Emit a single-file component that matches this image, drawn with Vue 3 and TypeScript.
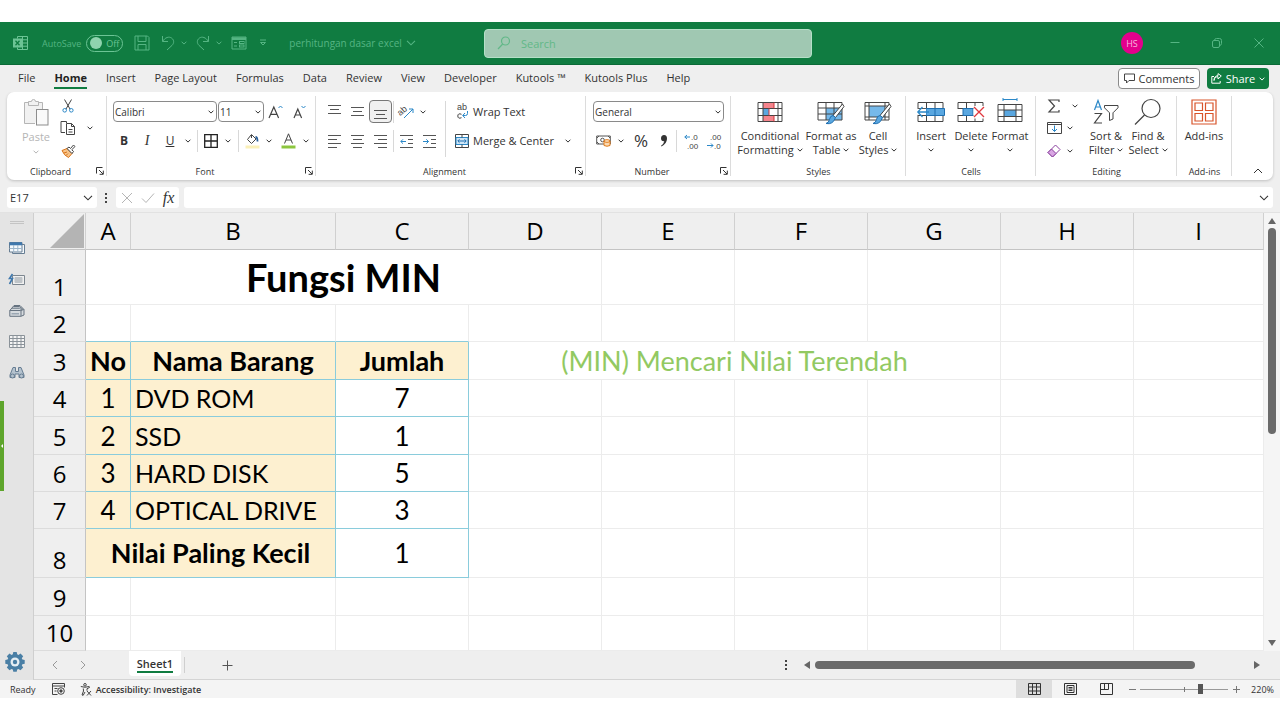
<script setup lang="ts">
import { h, ref } from 'vue'

interface Cell {
  text?: string
  span?: number
  kind?: string
}
interface Row {
  height: number
  cells: Cell[]
}

const Chev = () =>
  h('svg', { class: 'chev', width: 6, height: 4, viewBox: '0 0 6 4', 'aria-hidden': 'true' }, [
    h('path', { d: 'M.6.7 3 3.1 5.4.7', fill: 'none', stroke: 'currentColor', 'stroke-width': 1 }),
  ])

const BigChev = () =>
  h('svg', { class: 'chev', width: 10, height: 6, viewBox: '0 0 10 6', 'aria-hidden': 'true' }, [
    h('path', { d: 'M1 .8 5 4.8 9 .8', fill: 'none', stroke: 'currentColor', 'stroke-width': 1.1 }),
  ])

const Launcher = () =>
  h('button', { class: 'launcher', type: 'button', 'aria-label': 'More options' }, [
    h('svg', { width: 8, height: 8, viewBox: '0 0 8 8' }, [
      h('path', { d: 'M.5 6.5V.5h6M3 3l4 4M7.3 3.6v3.7H3.6', fill: 'none', stroke: '#333', 'stroke-width': 1 }),
    ]),
  ])

const tabs = [
  'File', 'Home', 'Insert', 'Page Layout', 'Formulas', 'Data', 'Review', 'View',
  'Developer', 'Kutools ™', 'Kutools Plus', 'Help',
]
const activeTab = ref('Home')

const columns = ['A', 'B', 'C', 'D', 'E', 'F', 'G', 'H', 'I']
const blank = (n: number): Cell[] => Array.from({ length: n }, () => ({}))

const item = (no: string, name: string, qty: string): Cell[] => [
  { text: no, kind: 'box tint' },
  { text: name, kind: 'box tint left' },
  { text: qty, kind: 'box' },
  ...blank(6),
]

const rows: Row[] = [
  { height: 55, cells: [{ text: 'Fungsi MIN', span: 4, kind: 'title' }, ...blank(5)] },
  { height: 37, cells: [{ kind: 'above' }, { kind: 'above' }, { kind: 'above' }, ...blank(6)] },
  {
    height: 38,
    cells: [
      { text: 'No', kind: 'box tint bold' },
      { text: 'Nama Barang', kind: 'box tint bold' },
      { text: 'Jumlah', kind: 'box tint bold' },
      { text: '(MIN) Mencari Nilai Terendah', span: 4, kind: 'note' },
      ...blank(2),
    ],
  },
  { height: 37, cells: item('1', 'DVD ROM', '7') },
  { height: 38, cells: item('2', 'SSD', '1') },
  { height: 37, cells: item('3', 'HARD DISK', '5') },
  { height: 37, cells: item('4', 'OPTICAL DRIVE', '3') },
  {
    height: 49,
    cells: [
      { text: 'Nilai Paling Kecil', span: 2, kind: 'box tint bold' },
      { text: '1', kind: 'box' },
      ...blank(6),
    ],
  },
  { height: 38, cells: blank(9) },
  { height: 35, cells: blank(9) },
]

const zoom = ref(70)
const search = ref('')
const autoSave = ref(false)
const nameBox = ref('E17')
const formula = ref('')
</script>

<template>
  <div class="app">
    <header class="titlebar">
      <div class="tb-left">
        <svg class="logo" width="16" height="16" viewBox="0 0 16 16" fill="none" stroke="#6cc495">
          <path d="M4.5 3.5v-2h10v13h-10v-2M9.500 1.500v13M9.500 4.800h5M9.500 8h5M9.500 11.200h5" />
          <rect x=".5" y="4" width="8" height="8" fill="#6cc495" />
          <path d="M2.500 5.800l4 4.500M6.500 5.800l-4 4.500" stroke="#107c41" stroke-width="1.300" />
        </svg>
        <label class="autosave">
          <span>AutoSave</span>
          <input v-model="autoSave" type="checkbox" />
          <span class="switch"><i></i>Off</span>
        </label>
        <button class="tb save" type="button" aria-label="Save">
          <svg width="16" height="16" viewBox="0 0 16 16" fill="none" stroke="currentColor">
            <path d="M1 1h12.500l1.500 1.500V15H1zM4 1v5.500h8V1M4 15V9.500h8V15" />
          </svg>
        </button>
        <button class="tb undo" type="button" aria-label="Undo">
          <svg width="14" height="16" viewBox="0 0 14 16" fill="none" stroke="currentColor">
            <path d="M1.500 1v5.500H7M1.700 6.300C4 2.500 8 1 10.800 3.200c2.500 2 2.400 5 .2 7.200L6 15" />
          </svg>
        </button>
        <button class="tb more" type="button" aria-label="Undo list"><Chev /></button>
        <button class="tb redo" type="button" aria-label="Redo">
          <svg width="14" height="16" viewBox="0 0 14 16" fill="none" stroke="currentColor">
            <path d="M12.500 1v5.500H7M12.300 6.300C10 2.500 6 1 3.200 3.200c-2.500 2-2.400 5-.2 7.200L8 15" />
          </svg>
        </button>
        <button class="tb more" type="button" aria-label="Redo list"><Chev /></button>
        <button class="tb form" type="button" aria-label="Form">
          <svg width="16" height="14" viewBox="0 0 16 14" fill="none" stroke="currentColor">
            <path d="M1 1h14v12H1zM1 3.500h14M3 6.500h3M3 10h3" />
            <path d="M1 2.300h14" stroke-width="2" />
            <rect x="8.500" y="5.500" width="4.500" height="2" /><rect x="8.500" y="9" width="4.500" height="2" />
          </svg>
        </button>
        <button class="tb custom" type="button" aria-label="Customize toolbar">
          <svg width="8" height="8" viewBox="0 0 8 8" fill="none" stroke="currentColor"><path d="M1 1h6M1.500 3.500h5L4 6z" /></svg>
        </button>
        <button class="tb doc" type="button">perhitungan dasar excel <BigChev /></button>
      </div>
      <label class="search">
        <svg width="14" height="14" viewBox="0 0 14 14" fill="none" stroke="#62b888" stroke-width="1.200">
          <circle cx="8.500" cy="5" r="4" /><path d="M5.700 8 1 13" />
        </svg>
        <input v-model="search" type="text" placeholder="Search" aria-label="Search" />
      </label>
      <div class="tb-right">
        <button class="avatar" type="button">HS</button>
        <button class="win" type="button" aria-label="Minimize">
          <svg width="12" height="12" viewBox="0 0 12 12" fill="none" stroke="currentColor"><path d="M1.500 5.500h9" /></svg>
        </button>
        <button class="win" type="button" aria-label="Restore">
          <svg width="12" height="12" viewBox="0 0 12 12" fill="none" stroke="currentColor">
            <rect x="1.500" y="3.500" width="7" height="7" rx="1.500" /><path d="M3.500 3.200q.2-1.700 2-1.700h3q2 0 2 2v3q0 1.600-1.700 2" />
          </svg>
        </button>
        <button class="win" type="button" aria-label="Close">
          <svg width="12" height="12" viewBox="0 0 12 12" fill="none" stroke="currentColor"><path d="M1.500 1.500l9 9M10.500 1.500l-9 9" /></svg>
        </button>
      </div>
    </header>

    <nav class="tabs">
      <button
        v-for="t in tabs" :key="t" type="button" class="tab" :class="{ active: t === activeTab }"
        @click="activeTab = t"
      >{{ t }}</button>
      <button class="comments" type="button">
        <svg width="11" height="11" viewBox="0 0 11 11" fill="none" stroke="#444"><path d="M.5 1h10v6.500H5L2.500 10V7.500h-2z" /></svg>
        Comments
      </button>
      <button class="share" type="button">
        <svg width="11" height="11" viewBox="0 0 11 11" fill="none" stroke="#fff">
          <path d="M3 3.500H.8v6.700h8.400V8M3 7.500c.3-2.600 1.700-3.700 4-3.800V6l3.300-3L7 .6v2C4.500 2.800 3 4.500 3 7.500z" />
        </svg>
        Share <Chev />
      </button>
    </nav>

    <section class="ribbon">
      <div class="group g-clip">
        <div class="body">
          <button class="paste" type="button">
            <svg width="26" height="28" viewBox="0 0 26 28" fill="#f1f1f1" stroke="#b5b5b5">
              <path d="M12 24.500H1.500V3.500h18V10" /><path d="M5.500 6.500v-4h3q0-2 2-2t2 2h3v4z" />
              <rect x="13.500" y="10.500" width="11.500" height="15.500" fill="#fafafa" stroke="#8d8d8d" />
            </svg>
            <span>Paste</span><Chev />
          </button>
          <div class="stack">
            <div class="line">
              <button class="b20" type="button" aria-label="Cut">
                <svg width="12" height="14" viewBox="0 0 12 14" fill="none" stroke="#444">
                  <path d="M2.500.5 8 10M9.500.5 4 10" /><circle cx="2.700" cy="11.300" r="1.800" stroke="#2b88c8" /><circle cx="9.300" cy="11.300" r="1.800" stroke="#2b88c8" />
                </svg>
              </button>
            </div>
            <div class="line">
              <button class="b20" type="button" aria-label="Copy">
                <svg width="16" height="16" viewBox="0 0 16 16" fill="none" stroke="#444">
                  <path d="M5 12.500H1v-11h5.500V3M6.500 3.500h5l3 3v8h-8zM11.500 3.500v3h3M8.500 9.500h4M8.500 12h4" />
                </svg>
              </button>
              <button class="b14 gap" type="button" aria-label="Copy options"><Chev /></button>
            </div>
            <div class="line">
              <button class="b20" type="button" aria-label="Format painter">
                <svg width="15" height="14" viewBox="0 0 15 14" fill="none">
                  <path d="M1 6.500 6 4.500l5 5-3.500 4Q3 11.500 1 6.500z" fill="#f7c48a" stroke="#d9741a" /><path d="M3 9l3-1M5 11.500l2-2" stroke="#d9741a" />
                  <path d="M6 4.500 8 3l1.500 1.500L12.500 1l1.500 1.500-3.200 3.200L12.500 7.500 11 9.500z" fill="#fff" stroke="#444" />
                </svg>
              </button>
            </div>
          </div>
        </div>
        <div class="cap"><span>Clipboard</span><Launcher /></div>
      </div>

      <div class="group g-font">
        <div class="body rows">
          <div class="line">
            <label class="combo c-font"><select aria-label="Font"><option>Calibri</option></select><Chev /></label>
            <label class="combo c-size"><select aria-label="Font size"><option>11</option></select><Chev /></label>
            <button class="b24" type="button" aria-label="Increase font size">
              <svg width="16" height="16" viewBox="0 0 16 16"><path d="M1 14 5.800 3 10.600 14M2.700 10.300h6.200" fill="none" stroke="#444" stroke-width="1.200" /><path d="M10.500 4l2-2 2 2" fill="none" stroke="#2b88c8" /></svg>
            </button>
            <button class="b24" type="button" aria-label="Decrease font size">
              <svg width="16" height="16" viewBox="0 0 16 16"><path d="M2 14 5.800 5 9.600 14M3.400 11h4.800" fill="none" stroke="#444" stroke-width="1.200" /><path d="M9.500 2l2 2 2-2" fill="none" stroke="#2b88c8" /></svg>
            </button>
          </div>
          <div class="line">
            <button class="b24 glyph" type="button"><b>B</b></button>
            <button class="b22 glyph serif" type="button"><i>I</i></button>
            <button class="b24 glyph" type="button"><u>U</u></button>
            <button class="b12" type="button" aria-label="Underline options"><Chev /></button>
            <span class="sep"></span>
            <button class="b20" type="button" aria-label="Borders">
              <svg width="14" height="14" viewBox="0 0 14 14" fill="none" stroke="#222" stroke-width="1.300"><path d="M.7.7h12.600v12.600H.7zM7 .7v12.600M.7 7h12.600" /></svg>
            </button>
            <button class="b14" type="button" aria-label="Border options"><Chev /></button>
            <span class="sep"></span>
            <button class="b20" type="button" aria-label="Fill colour">
              <svg width="15" height="16" viewBox="0 0 15 16" fill="none">
                <path d="M6 2 2.500 6.500l4 4L11 6 6.500 1.500V5" stroke="#444" /><path d="M10.500 4q2 0 2 4.500" stroke="#2b5f9a" stroke-width="1.800" />
                <path d="M.5 12.500h14v3H.5z" fill="#fbf0b8" />
              </svg>
            </button>
            <button class="b14" type="button" aria-label="Fill options"><Chev /></button>
            <button class="b24" type="button" aria-label="Font colour">
              <svg width="15" height="16" viewBox="0 0 15 16"><path d="M3.500 10.500 7.500.8 11.500 10.500M5 7h5" fill="none" stroke="#444" /><path d="M.5 12.500h14v3H.5z" fill="#8cc63f" /></svg>
            </button>
            <button class="b12" type="button" aria-label="Font colour options"><Chev /></button>
          </div>
        </div>
        <div class="cap"><span>Font</span><Launcher /></div>
      </div>

      <div class="group g-align">
        <div class="body">
          <div class="rows acol">
            <div class="line">
              <button class="b23" type="button" aria-label="Top align">
                <svg width="13" height="14" viewBox="0 0 13 14" stroke="#555"><path d="M0 .5h13M2 4.500h9M0 8.500h13" /></svg>
              </button>
              <button class="b23" type="button" aria-label="Middle align">
                <svg width="13" height="14" viewBox="0 0 13 14" stroke="#555"><path d="M0 2.500h13M2 6.500h9M0 10.500h13" /></svg>
              </button>
              <button class="b23 on" type="button" aria-label="Bottom align">
                <svg width="13" height="14" viewBox="0 0 13 14" stroke="#555"><path d="M0 5.500h13M2 9.500h9M0 13.500h13" /></svg>
              </button>
              <span class="sep thin"></span>
              <button class="b22" type="button" aria-label="Orientation">
                <svg width="15" height="14" viewBox="0 0 15 14" fill="none"><text x="0" y="8" transform="rotate(-42 5 8)" font-size="9" fill="#444">ab</text><path d="M5 13 14 4M10 4h4v4" stroke="#2b88c8" /></svg>
              </button>
              <button class="b12" type="button" aria-label="Orientation options"><Chev /></button>
            </div>
            <div class="line">
              <button class="b23" type="button" aria-label="Align left">
                <svg width="13" height="14" viewBox="0 0 13 14" stroke="#555"><path d="M0 1.500h13M0 5.500h9M0 9.500h13M0 13.500h9" /></svg>
              </button>
              <button class="b23" type="button" aria-label="Center">
                <svg width="13" height="14" viewBox="0 0 13 14" stroke="#555"><path d="M0 1.500h13M2 5.500h9M0 9.500h13M2 13.500h9" /></svg>
              </button>
              <button class="b23" type="button" aria-label="Align right">
                <svg width="13" height="14" viewBox="0 0 13 14" stroke="#555"><path d="M0 1.500h13M4 5.500h9M0 9.500h13M4 13.500h9" /></svg>
              </button>
              <span class="sep thin"></span>
              <button class="b22" type="button" aria-label="Decrease indent">
                <svg width="13" height="14" viewBox="0 0 13 14" fill="none" stroke="#555"><path d="M0 1.500h13M8 5.500h5M8 9.500h5M0 13.500h13" /><path d="M6 7.500H.8M3 5.300.8 7.500 3 9.700" stroke="#2b88c8" /></svg>
              </button>
              <button class="b24" type="button" aria-label="Increase indent">
                <svg width="13" height="14" viewBox="0 0 13 14" fill="none" stroke="#555"><path d="M0 1.500h13M8 5.500h5M8 9.500h5M0 13.500h13" /><path d="M0 7.500h5.500M3.300 5.300l2.200 2.200-2.200 2.200" stroke="#2b88c8" /></svg>
              </button>
            </div>
          </div>
          <span class="tall"></span>
          <div class="rows wcol">
            <div class="line">
              <button class="wide" type="button">
                <svg width="14" height="16" viewBox="0 0 14 16" fill="none"><text x="2" y="6" font-size="9" fill="#444">ab</text><path d="M6.500 10.300q-3.500-1.500-3.700 1.700.2 3.200 3.700 1.700" stroke="#444" /><path d="M12.500 7v2.500q0 2-2 2H8M10 9l-2.300 2.500L10 14" stroke="#2b88c8" /></svg>
                Wrap Text
              </button>
            </div>
            <div class="line">
              <button class="wide" type="button">
                <svg width="14" height="14" viewBox="0 0 14 14" fill="none"><path d="M.5.5h13v13H.5z" stroke="#444" /><path d="M1 3.500h12v7H1z" fill="#cfe6f7" stroke="#2b88c8" /><path d="M7 .5v3M7 10.500v3" stroke="#444" /><path d="M3 7h8M4.500 5.300 2.800 7l1.700 1.700M9.500 5.300 11.200 7 9.500 8.700" stroke="#1f6fb0" /></svg>
                Merge &amp; Center
              </button>
              <button class="b14 mergemore" type="button" aria-label="Merge options"><Chev /></button>
            </div>
          </div>
        </div>
        <div class="cap"><span>Alignment</span><Launcher /></div>
      </div>

      <div class="group g-num">
        <div class="body rows">
          <div class="line">
            <label class="combo c-num"><select aria-label="Number format"><option>General</option></select><Chev /></label>
          </div>
          <div class="line">
            <button class="b22" type="button" aria-label="Accounting format">
              <svg width="16" height="14" viewBox="0 0 16 14" fill="none"><path d="M.7 2h13.600v8H.7z" stroke="#555" /><path d="M3 2 1 4M12 2l2 2M1 8l2 2" stroke="#555" /><circle cx="6.500" cy="6" r="1.800" stroke="#555" /><path d="M8 7v4.500q3 1.500 6 0V7q-3 1.400-6 0z" fill="#fbd9b0" stroke="#e07b1a" /><ellipse cx="11" cy="7" rx="3" ry="1.300" fill="#fbe6cc" stroke="#e07b1a" /></svg>
            </button>
            <button class="b12" type="button" aria-label="Accounting options"><Chev /></button>
            <button class="b28 pct" type="button">%</button>
            <button class="b18" type="button" aria-label="Comma style">
              <svg width="8" height="12" viewBox="0 0 8 12"><path d="M4 0q3.200.2 3 4Q6.600 9 1.500 11.500L1 10.700Q4 8.500 4.300 6.200 1 6.500 1 3.200 1.200.2 4 0z" fill="#333" /></svg>
            </button>
            <span class="sep"></span>
            <button class="b22" type="button" aria-label="Increase decimal">
              <svg class="dec" width="14" height="18" viewBox="0 0 14 18"><path d="M6 5H.8M3 3 .8 5 3 7" fill="none" stroke="#2b88c8" /><text x="7" y="8">.0</text><text x="3" y="17">.00</text></svg>
            </button>
            <button class="b24" type="button" aria-label="Decrease decimal">
              <svg class="dec" width="14" height="18" viewBox="0 0 14 18"><path d="M0 13.500h6M4 11.500l2 2-2 2" fill="none" stroke="#2b88c8" /><text x="3" y="8">.00</text><text x="7" y="17">.0</text></svg>
            </button>
          </div>
        </div>
        <div class="cap"><span>Number</span><Launcher /></div>
      </div>

      <div class="group g-styles">
        <div class="body bigs">
          <button class="big w72" type="button">
            <svg width="26" height="24" viewBox="0 0 26 24" fill="none">
              <path d="M1 2.500h24v19H1z" fill="#fff" /><path d="M6 2.500h11v6H6zM6 15.500h11v6H6zM6 8.500h8v7H6z" fill="#f5848c" /><path d="M6 8.500h6v7H6z" fill="#5aa7e0" /><path d="M12 8.500h7v7h-7z" fill="#fff" />
              <path d="M1 2.500h24v19H1zM1 8.500h24M1 15.500h24M6 2.500v19M21 2.500v19" stroke="#444" /><path d="M17 2.500v6M12 8.500v7M17 15.500v6" stroke="#d13438" />
            </svg>
            <span>Conditional</span><span>Formatting <Chev /></span>
          </button>
          <button class="big w50" type="button">
            <svg width="28" height="26" viewBox="0 0 28 26" fill="none">
              <path d="M9 9h16v12H9z" fill="#76b9ea" /><path d="M1 3.500h24v17.500H1zM1 9h24M1 15h24M9 3.500V21M17 3.500V21" stroke="#444" />
              <path d="M25.500 5 16 16.500l2.500 2L27 7.500z" fill="#fff" stroke="#444" /><path d="M16 16.500q-3 .3-3.500 4-.5 3-3.500 4 7 1.500 9.500-6z" fill="#5aa7e0" stroke="#1f6fb0" />
            </svg>
            <span>Format as</span><span>Table <Chev /></span>
          </button>
          <button class="big w44" type="button">
            <svg width="28" height="26" viewBox="0 0 28 26" fill="none">
              <path d="M5 7h16v11H5z" fill="#76b9ea" /><path d="M1 3.500h24v17.500H1zM1 7h24M1 18h24M5 3.500V21M21 3.500V21" stroke="#444" />
              <path d="M25.500 5 16 16.500l2.500 2L27 7.500z" fill="#fff" stroke="#444" /><path d="M16 16.500q-3 .3-3.500 4-.5 3-3.500 4 7 1.500 9.500-6z" fill="#5aa7e0" stroke="#1f6fb0" />
            </svg>
            <span>Cell</span><span>Styles <Chev /></span>
          </button>
        </div>
        <div class="cap"><span>Styles</span></div>
      </div>

      <div class="group g-cells">
        <div class="body bigs">
          <button class="big w40" type="button">
            <svg width="28" height="24" viewBox="0 0 28 24" fill="none">
              <path d="M1 2.500h25v19H1zM1 8.500h25M1 15.500h25M9.500 2.500v19M18 2.500v19" stroke="#444" /><path d="M9 8.500h18.500v7H9z" fill="#5aa7e0" stroke="#1f6fb0" /><path d="M18 8.500v7" stroke="#1f6fb0" />
              <path d="M0 8.900h9v6H0z" fill="#fff" /><path d="M12 12H1M5.500 7 .8 12l4.700 5" stroke="#2b88c8" stroke-width="1.300" />
            </svg>
            <span>Insert</span><span><Chev /></span>
          </button>
          <button class="big w40" type="button">
            <svg width="28" height="24" viewBox="0 0 28 24" fill="none">
              <path d="M1 2.500h25v19H1zM1 8.500h25M1 15.500h25M9.500 2.500v19M18 2.500v19" stroke="#444" /><path d="M0 9h6v6H0z" fill="#fff" /><path d="M6 8.500h10v7H6z" fill="#5aa7e0" stroke="#1f6fb0" />
              <path d="M16.500 6h11v12.500h-11z" fill="#fff" /><path d="M17 7l10 10M27 7 17 17" stroke="#e0383e" stroke-width="1.300" />
            </svg>
            <span>Delete</span><span><Chev /></span>
          </button>
          <button class="big w38" type="button">
            <svg width="26" height="28" viewBox="0 0 26 28" fill="none">
              <path d="M6 1.500h14M6 0v3M20 0v3" stroke="#2b88c8" /><path d="M7 12h12v7H7z" fill="#5aa7e0" /><path d="M1 6.500h24v17H1zM1 12h24M1 18.500h24M7 6.500v17M19 6.500v17" stroke="#444" />
            </svg>
            <span>Format</span><span><Chev /></span>
          </button>
        </div>
        <div class="cap"><span>Cells</span></div>
      </div>

      <div class="group g-edit">
        <div class="body">
          <div class="stack">
            <div class="line">
              <button class="b20" type="button" aria-label="AutoSum">
                <svg width="12" height="14" viewBox="0 0 12 14" fill="none" stroke="#444" stroke-width="1.200"><path d="M11 3V1H1l5.500 6L1 13h10v-2" /></svg>
              </button>
              <button class="b12 gap" type="button" aria-label="AutoSum options"><Chev /></button>
            </div>
            <div class="line">
              <button class="b20" type="button" aria-label="Fill">
                <svg width="15" height="14" viewBox="0 0 15 14" fill="none" stroke="#444"><path d="M.5 1.500h14v11H.5zM.5 3.500h14" /><path d="M7.500 4.500v6M5 8l2.500 2.500L10 8" stroke="#2b88c8" /></svg>
              </button>
              <button class="b12" type="button" aria-label="Fill options"><Chev /></button>
            </div>
            <div class="line">
              <button class="b20" type="button" aria-label="Clear">
                <svg width="14" height="14" viewBox="0 0 14 14" fill="none" stroke="#8a3f9e"><path d="M8.500 1 13 5.500 5.500 13 1 8.500z" fill="#fff" /><path d="M4.500 5 9 9.500 5.500 13 1 8.500z" fill="#d9a6e3" /></svg>
              </button>
              <button class="b12" type="button" aria-label="Clear options"><Chev /></button>
            </div>
          </div>
          <div class="bigs">
            <button class="big w42" type="button">
              <svg width="26" height="26" viewBox="0 0 26 26" fill="none"><path d="M1.500 11 5 1.500 8.500 11M2.700 8h4.600" stroke="#2b88c8" stroke-width="1.200" /><path d="M1.500 14.500h7l-7 9.500h7.500" stroke="#444" stroke-width="1.200" /><path d="M11.500 6.500H25v2.300l-5 5V20l-3.500 1.500v-7.700l-5-5z" stroke="#444" /></svg>
              <span>Sort &amp;</span><span>Filter <Chev /></span>
            </button>
            <button class="big w42" type="button">
              <svg width="28" height="28" viewBox="0 0 28 28" fill="none" stroke="#444"><circle cx="17" cy="10.500" r="9" stroke-width="1.200" /><path d="M10.500 17 1 26.500" stroke-width="1.200" /></svg>
              <span>Find &amp;</span><span>Select <Chev /></span>
            </button>
          </div>
        </div>
        <div class="cap"><span>Editing</span></div>
      </div>

      <div class="group g-add">
        <div class="body bigs">
          <button class="big w54" type="button">
            <svg width="26" height="26" viewBox="0 0 26 26" fill="none" stroke="#d8542a" stroke-width="1.200"><path d="M1 1h24v24H1zM4 4h7.500v7.500H4zM14.500 4H22v7.500h-7.500zM4 14.500h7.500V22H4zM14.500 14.500H22V22h-7.500z" /></svg>
            <span>Add-ins</span><span></span>
          </button>
        </div>
        <div class="cap"><span>Add-ins</span></div>
      </div>
      <button class="collapse" type="button" aria-label="Collapse ribbon">
        <svg width="10" height="6" viewBox="0 0 10 6" fill="none" stroke="#333"><path d="M1 5 5 1l4 4" /></svg>
      </button>
    </section>

    <section class="fbar">
      <div class="namebox"><input v-model="nameBox" type="text" aria-label="Name box" /><button type="button" aria-label="Names"><BigChev /></button></div>
      <span class="dots"></span>
      <div class="fxbox">
        <button type="button" aria-label="Cancel"><svg width="12" height="12" viewBox="0 0 12 12" stroke="#b5b5b5"><path d="M1 1l10 10M11 1 1 11" /></svg></button>
        <button type="button" aria-label="Enter"><svg width="14" height="12" viewBox="0 0 14 12" fill="none" stroke="#b5b5b5"><path d="M1 6.500 5 10.500 13 1.500" /></svg></button>
        <button class="fx" type="button">fx</button>
      </div>
      <div class="formula"><input v-model="formula" type="text" aria-label="Formula" /><button type="button" aria-label="Expand"><BigChev /></button></div>
    </section>

    <main class="work">
      <aside class="pane">
        <span class="grip"></span>
        <button type="button" aria-label="Workbooks">
          <svg width="16" height="13" viewBox="0 0 16 13" fill="#f5f9fc" stroke="#667d92"><path d="M3.500 2.500h12v9h-12z" /><path d="M.5.500h12.500v9.500H.5z" /><path d="M.5 1.800H13" stroke="#3f78ad" stroke-width="3" /><path d="M4.700 3v7M8.800 3v7M.5 6.500H13" stroke="#9db7cc" /></svg>
        </button>
        <button type="button" aria-label="AutoText">
          <svg width="17" height="13" viewBox="0 0 17 13" fill="none" stroke="#7d8790"><path d="M4.500 2.500h12v9h-12z" fill="#f0f0f0" /><path d="M7 4.500h7v5H7z" fill="#bfc4c8" stroke="#bfc4c8" /><path d="M4.500 1 1.500 5.500h3L1.500 11" stroke="#3f78ad" stroke-width="1.600" /></svg>
        </button>
        <button type="button" aria-label="Names">
          <svg width="16" height="13" viewBox="0 0 16 13" fill="#d5dade" stroke="#667380"><path d="M.8 6.500 5 1.500h6l4 4V11l-3 1.300H.8zM.8 6.500h11l3-1M12 6.500v5.500M3 4.200h7.500l2.500 2M4.500 2.500h6l3.500 3" /><path d="M2.500 9h7.500v1.500H2.500z" fill="#9aa7b3" stroke="none" /></svg>
        </button>
        <button type="button" aria-label="Columns">
          <svg width="16" height="13" viewBox="0 0 16 13" fill="#f4f4f4" stroke="#8a9299"><path d="M.5.500h15v12H.5zM.5 3.500h15M.5 6.500h15M.5 9.500h15M4 .5v12M8 .5v12M12 .5v12" /></svg>
        </button>
        <button type="button" aria-label="Find">
          <svg width="16" height="13" viewBox="0 0 16 13" fill="#b4c2ce" stroke="#667d92"><path d="M4 1.500h2.500v4h3v-4H12l3 7.500v2.500h-5V8H6v3.500H1V9z" /><circle cx="3.500" cy="10" r="2" /><circle cx="12.500" cy="10" r="2" /></svg>
        </button>
        <button class="gear" type="button" aria-label="Settings">
          <svg width="20" height="20" viewBox="0 0 20 20" fill="#4a7fa5"><path d="M8.300 0h3.400l.5 2.300 1.300.6 2-1.400 2.700 2.700-1.400 2 .6 1.300 2.300.6v3.600l-2.300.6-.6 1.300 1.400 2-2.700 2.700-2-1.400-1.300.6-.5 2.300H8.300l-.5-2.300-1.300-.6-2 1.400-2.700-2.700 1.400-2-.6-1.300L.3 11.700V8.100l2.300-.6.6-1.300-1.400-2 2.700-2.700 2 1.400 1.300-.6z" /><circle cx="10" cy="10" r="4.500" fill="#e6eef3" /><circle cx="10" cy="10" r="2.200" /></svg>
        </button>
        <span class="handle"></span>
      </aside>

      <div class="book">
        <div class="sheetrow">
          <table class="sheet">
            <colgroup>
              <col class="k-head" /><col class="k-a" /><col class="k-b" />
              <col v-for="n in 6" :key="n" class="k-n" /><col />
            </colgroup>
            <thead>
              <tr>
                <th class="corner" aria-label="Select all"><svg width="34" height="34" viewBox="0 0 34 34"><path d="M34 0v34H0z" fill="#b4b4b4" /></svg></th>
                <th v-for="c in columns" :key="c" scope="col">{{ c }}</th>
              </tr>
            </thead>
            <tbody>
              <tr v-for="(r, i) in rows" :key="i" :style="{ height: r.height + 'px' }">
                <th scope="row">{{ i + 1 }}</th>
                <td v-for="(c, j) in r.cells" :key="j" :colspan="c.span ?? 1" :class="c.kind">{{ c.text }}</td>
              </tr>
            </tbody>
          </table>
          <div class="vscroll"><i class="arr-up"></i><i class="vthumb"></i><i class="arr-down"></i></div>
        </div>
        <div class="sheettabs">
          <button class="nav" type="button" aria-label="Previous sheet"><svg width="6" height="10" viewBox="0 0 6 10" fill="none" stroke="#999"><path d="M5 1 1 5l4 4" /></svg></button>
          <button class="nav" type="button" aria-label="Next sheet"><svg width="6" height="10" viewBox="0 0 6 10" fill="none" stroke="#999"><path d="M1 1l4 4-4 4" /></svg></button>
          <button class="sheettab" type="button"><span>Sheet1</span></button>
          <span class="tabsep"></span>
          <button class="add" type="button" aria-label="New sheet"><svg width="11" height="11" viewBox="0 0 11 11" stroke="#555"><path d="M5.500.500v10M.5 5.500h10" /></svg></button>
          <div class="hscroll"><span class="dots"></span><i class="arr-left"></i><i class="hthumb"></i><i class="arr-right"></i></div>
        </div>
      </div>
    </main>

    <footer class="status">
      <span class="ready">Ready</span>
      <button class="macro" type="button" aria-label="Record macro">
        <svg width="13" height="12" viewBox="0 0 13 12" fill="none" stroke="#444"><path d="M5.500 11.500h-5V.5h12v4M.5 3h12M2.500 5.500h3M2.500 8h2" /><circle cx="9" cy="8" r="3.300" /><circle cx="9" cy="8" r="1.200" fill="#444" /></svg>
      </button>
      <button class="access" type="button">
        <svg width="12" height="13" viewBox="0 0 12 13" fill="none" stroke="#444"><circle cx="5" cy="1.800" r="1.300" /><path d="M.8 3.500q4 1.500 8.400 0l.3 1L7 5.700v2M3.300 5.500l.2 2.500-1.500 4 1.200.3L5 9M7 8l4 4.500M11 8l-4 4.500" /></svg>
        Accessibility: Investigate
      </button>
      <div class="views">
        <button class="view on" type="button" aria-label="Normal"><svg width="13" height="12" viewBox="0 0 13 12" fill="none" stroke="#333"><path d="M.5.500h12v11H.5zM.5 4h12M.5 8h12M4.500.500v11M8.500.500v11" /></svg></button>
        <button class="view" type="button" aria-label="Page layout"><svg width="13" height="12" viewBox="0 0 13 12" fill="none" stroke="#333"><path d="M.5.500h12v11H.5zM3 2.500h7v7H3zM4.500 4.500h4M4.500 6h4M4.500 7.500h4" /></svg></button>
        <button class="view" type="button" aria-label="Page break"><svg width="13" height="12" viewBox="0 0 13 12" fill="none" stroke="#333"><path d="M.5.500h12v11H.5zM.5 6.500h8v-6M4.500.500v6" /></svg></button>
      </div>
      <button class="zbtn" type="button" aria-label="Zoom out"><svg width="7" height="7" viewBox="0 0 7 7" stroke="#777"><path d="M0 3.500h7" /></svg></button>
      <input v-model="zoom" class="slider" type="range" min="0" max="100" aria-label="Zoom" />
      <button class="zbtn" type="button" aria-label="Zoom in"><svg width="7" height="7" viewBox="0 0 7 7" stroke="#777"><path d="M0 3.500h7M3.500 0v7" /></svg></button>
      <span class="pct2">220%</span>
    </footer>
  </div>
</template>

<style>
body {
  margin: 0;
  background: #fff;
}
</style>

<style scoped>
.app {
  padding: 22px 0;
  background: #fff;
  font-family: 'Open Sans', 'Noto Sans', sans-serif;
  font-size: 11px;
  color: #333;
}
.app *, .app { box-sizing: border-box; }
button, input, select {
  font: inherit;
  color: inherit;
  border: 0;
  background: none;
  padding: 0;
  margin: 0;
  outline: 0;
}
button {
  display: flex;
  align-items: center;
  justify-content: center;
  white-space: nowrap;
  flex: none;
}
svg { flex: none; display: block; overflow: visible; }
svg text { font-family: 'Liberation Sans', sans-serif; }
.chev { display: inline-block; }

/* title bar */
.titlebar {
  display: grid;
  grid-template-columns: 1fr 328px 1fr;
  align-items: center;
  height: 43px;
  padding-left: 16px;
  background: #107c41;
  border-bottom: 1px solid #0b6a37;
  color: #55b583;
  font-size: 10px;
}
.tb-left { display: flex; align-items: center; margin-left: -3px; }
.autosave { display: flex; align-items: center; gap: 5px; margin-left: 13px; font-size: 9px; }
.autosave input { position: absolute; opacity: 0; }
.switch {
  display: flex;
  align-items: center;
  gap: 4px;
  width: 37px;
  height: 17px;
  padding-left: 3px;
  border: 1px solid #6cc495;
  border-radius: 9px;
  color: #6cc495;
}
.switch i { width: 12px; height: 12px; border-radius: 50%; background: #8fd3ae; }
.save { margin-left: 11px; }
.undo { margin-left: 11px; }
.more { width: 14px; margin-left: 2px; }
.redo { margin-left: 5px; }
.form { margin-left: 5px; }
.custom { margin-left: 12px; }
.doc { gap: 4px; margin-left: 22px; }
.search {
  display: flex;
  align-items: center;
  gap: 10px;
  height: 29px;
  padding-left: 12px;
  border: 1px solid #b5e0c8;
  border-radius: 4px;
  background: #a0c8b2;
  font-size: 11px;
}
.search input { flex: 1; min-width: 0; }
.search input::placeholder { color: #62b888; opacity: 1; }
.tb-right { display: flex; align-items: center; justify-content: flex-end; }
.avatar {
  width: 22px;
  height: 22px;
  margin-right: 11px;
  border-radius: 50%;
  background: #e3008c;
  color: #f7b8de;
  font-size: 9px;
}
.win { width: 42px; height: 30px; }

/* ribbon tabs */
.tabs {
  display: flex;
  align-items: center;
  height: 27px;
  padding: 0 11px 0 18px;
  background: #efefef;
  gap: 19px;
}
.tab { height: 20px; border-bottom: 2px solid transparent; }
.tab.active { font-weight: 700; border-color: #107c41; color: #222; }
.comments, .share { height: 21px; border-radius: 4px; gap: 4px; }
.comments { width: 82px; margin-left: auto; background: #fff; border: 1px solid #8a8a8a; }
.share { width: 62px; margin-left: -12px; background: #107c41; color: #fff; }

/* ribbon */
.ribbon {
  display: flex;
  height: 88px;
  margin: 0 7px;
  background: #fff;
  border-radius: 7px;
  box-shadow: 0 1px 3px rgba(0, 0, 0, .2), 0 0 0 12px #efefef;
  clip-path: inset(0 -7px -7px -7px);
}
.group {
  display: flex;
  flex-direction: column;
  flex: none;
  background: linear-gradient(#dcdcdc, #dcdcdc) right 4px / 1px 80px no-repeat;
}
.g-clip { width: 100px; }
.g-font { width: 209px; }
.g-align { width: 270px; }
.g-num { width: 145px; }
.g-styles { width: 175px; }
.g-cells { width: 130px; }
.g-edit { width: 141px; }
.g-add { width: 55px; }
.body { display: flex; height: 70px; padding-top: 3px; }
.cap {
  display: flex;
  align-items: center;
  height: 18px;
  font-size: 9px;
  text-align: center;
}
.cap span { flex: 1; }
.launcher { width: 12px; margin-right: 1px; }
.rows { flex-direction: column; display: flex; gap: 6px; padding-top: 5px; }
.body.rows { padding-top: 8px; }
.rows .line { height: 23px; }
.g-font .rows { padding-left: 5px; }
.g-num .rows { padding-left: 7px; }
.line { display: flex; align-items: center; }
.stack { display: flex; flex-direction: column; }
.stack .line { height: 23px; }
.paste { flex-direction: column; justify-content: flex-start; width: 44px; margin-left: 7px; padding-top: 4px; color: #b5b5b5; }
.paste span { line-height: 19px; }
.paste .chev { margin-top: 4px; }
.gap { margin-left: 5px; }
.b12 { width: 12px; }
.b14 { width: 14px; }
.b18 { width: 18px; }
.b20 { width: 20px; }
.b22 { width: 22px; }
.b23 { width: 23px; height: 23px; }
.b24 { width: 24px; }
.b28 { width: 28px; }
.on.b23 { border: 1px solid #777; border-radius: 4px; background: #f0f0f0; }
.glyph { font-size: 12px; }
.serif { font-family: 'Liberation Serif', serif; font-size: 14px; }
.pct { font-size: 17px; }
.dec text { font-size: 8px; fill: #444; }
.sep { width: 1px; height: 22px; margin: 0 3px; background: #d8d8d8; }
.sep.thin { margin: 0 1px; }
.tall { width: 1px; height: 56px; margin-top: 6px; background: #d8d8d8; }
.acol { width: 129px; padding-left: 7px; }
.wcol { padding-left: 9px; }
.wide { gap: 4px; }
.mergemore { margin-left: 7px; }
.combo {
  display: grid;
  align-items: center;
  height: 21px;
  border: 1px solid #8a8a8a;
  border-radius: 4px;
  font-size: 10px;
}
.combo select { grid-area: 1 / 1; width: 100%; padding-left: 1px; appearance: none; }
.combo .chev { grid-area: 1 / 1; justify-self: end; margin-right: 2px; }
.c-font { width: 104px; margin-left: 1px; }
.c-size { width: 46px; margin-left: 1px; }
.c-num { width: 131px; }
.bigs { display: flex; }
.g-styles .bigs { padding-left: 3px; }
.g-cells .bigs { padding-left: 5px; }
.big { flex-direction: column; justify-content: flex-start; }
.big svg:first-child { height: 34px; }
.big span { height: 14px; line-height: 14px; }
.big span svg.chev { height: 4px; vertical-align: 2px; }
.w72 { width: 72px; }
.w54 { width: 54px; }
.w50 { width: 50px; }
.w44 { width: 44px; }
.w42 { width: 42px; }
.w40 { width: 40px; }
.w38 { width: 38px; }
.g-edit .stack { width: 49px; padding-left: 8px; }
.collapse { width: 20px; height: 18px; margin: 70px 5px 0 auto; }

/* formula bar */
.fbar { display: flex; padding: 7px 7px 4px; background: #efefef; }
.fbar > div { display: flex; align-items: center; height: 21px; background: #fff; border-radius: 3px; }
.namebox { width: 90px; }
.namebox input { flex: 1; min-width: 0; padding-left: 3px; }
.namebox button { width: 18px; }
.dots {
  width: 2px;
  height: 10px;
  background: repeating-linear-gradient(#444 0 2px, transparent 2px 4px);
}
.fbar .dots { margin: 6px 9px 0 8px; }
.fxbox { width: 63px; }
.fxbox button { width: 21px; }
.fx { font-family: 'Liberation Serif', serif; font-style: italic; font-size: 16px; }
.fbar > .formula { flex: 1; margin-left: 5px; }
.formula input { flex: 1; }
.formula button { width: 18px; }

/* workbook */
.work { display: flex; border-top: 1px solid #e2e2e2; }
.pane {
  position: relative;
  display: flex;
  flex-direction: column;
  align-items: center;
  width: 34px;
  padding-top: 8px;
  background: #e4e4e4;
  border-right: 1px solid #cfcfcf;
}
.pane button { height: 31px; }
.grip { width: 14px; height: 3px; margin-bottom: 9px; border: solid #c4c4c4; border-width: 1px 0; }
.pane .gear { margin: auto 4px 3px 0; }
.handle { position: absolute; left: 0; top: 188px; width: 4px; height: 90px; background: #5ea52c; }
.handle::after {
  content: '';
  position: absolute;
  right: 1px;
  top: 43px;
  border: solid transparent;
  border-width: 2px 2px 2px 0;
  border-right-color: #fff;
}
.book { flex: 1; min-width: 0; background: #efefef; }
.sheetrow { display: flex; }
.sheet {
  flex: 1;
  table-layout: fixed;
  border-collapse: separate;
  border-spacing: 0;
  width: 100px;
  background: #fff;
  color: #000;
}
.k-head { width: 52px; }
.k-a { width: 45px; }
.k-b { width: 205px; }
.k-n { width: 133px; }
.sheet th, .sheet td { padding: 0; line-height: 34px; white-space: nowrap; overflow: hidden; }
.sheet th { background: #efefef; font-weight: 400; font-size: 24px; }
thead th { height: 37px; border-right: 1px solid #d0d0d0; border-bottom: 1px solid #c4c4c4; }
tbody th { vertical-align: bottom; border-right: 1px solid #c4c4c4; border-bottom: 1px solid #dcdcdc; }
.corner svg { margin: 0 0 0 16px; }
.sheet td {
  border-right: 1px solid #ececec;
  border-bottom: 1px solid #ececec;
  font-family: Lato, 'Open Sans', sans-serif;
  font-size: 26px;
  text-align: center;
}
.sheet td.above { border-bottom-color: #8accdc; }
.sheet td.box { border-color: #8accdc; }
.sheet td.tint { background: #fdf0d0; }
.sheet td.bold { font-size: 27px; font-weight: 700; }
.sheet td.left { font-size: 25px; text-align: left; padding-left: 4px; }
.sheet td.title { font-size: 38px; font-weight: 700; }
.sheet td.note { font-size: 27px; color: #92c962; }
.vscroll { display: flex; flex-direction: column; align-items: center; width: 16px; padding: 5px 0; background: #f5f5f5; }
.arr-up { border: solid transparent; border-width: 0 4px 6px; border-bottom-color: #666; }
.arr-down { margin-top: auto; border: solid transparent; border-width: 6px 4px 0; border-top-color: #666; }
.vthumb { width: 8px; height: 206px; margin-top: 4px; border-radius: 4px; background: #6b6b6b; }
.sheettabs { display: flex; align-items: center; height: 29px; border-bottom: 1px solid #d4d4d4; }
.nav { width: 28px; }
.nav:first-child { margin-left: 7px; }
.sheettab { align-self: flex-start; width: 52px; height: 25px; margin-left: 32px; background: #fff; border-radius: 0 0 4px 4px; font-weight: 600; }
.sheettab span { height: 17px; line-height: 15px; margin-top: 2px; border-bottom: 2px solid #107c41; }
.tabsep { width: 1px; height: 16px; margin-left: 3px; background: #cfcfcf; }
.add { width: 20px; margin-left: 32px; }
.hscroll { display: flex; align-items: center; width: 495px; margin-left: auto; padding-right: 20px; }
.arr-left { margin-left: 17px; border: solid transparent; border-width: 4px 6px 4px 0; border-right-color: #666; }
.arr-right { margin-left: auto; border: solid transparent; border-width: 4px 0 4px 6px; border-left-color: #666; }
.hthumb { width: 380px; height: 8px; margin-left: 5px; border-radius: 4px; background: #6b6b6b; }

/* status bar */
.status { display: flex; align-items: center; height: 18px; padding: 0 6px 0 10px; background: #f4f4f4; font-size: 9px; }
.macro { margin-left: 16px; }
.access { gap: 4px; margin-left: 15px; font-weight: 600; }
.views { display: flex; margin-left: auto; }
.view { width: 36px; height: 18px; }
.view.on { background: #dedede; }
.zbtn { width: 16px; }
.slider {
  appearance: none;
  width: 88px;
  height: 12px;
  background:
    linear-gradient(#777, #777) center / 1px 5px no-repeat,
    linear-gradient(#999, #999) center / 100% 1px no-repeat;
}
.slider::-webkit-slider-thumb { appearance: none; width: 5px; height: 10px; background: #555; }
.pct2 { width: 30px; text-align: right; }
</style>
